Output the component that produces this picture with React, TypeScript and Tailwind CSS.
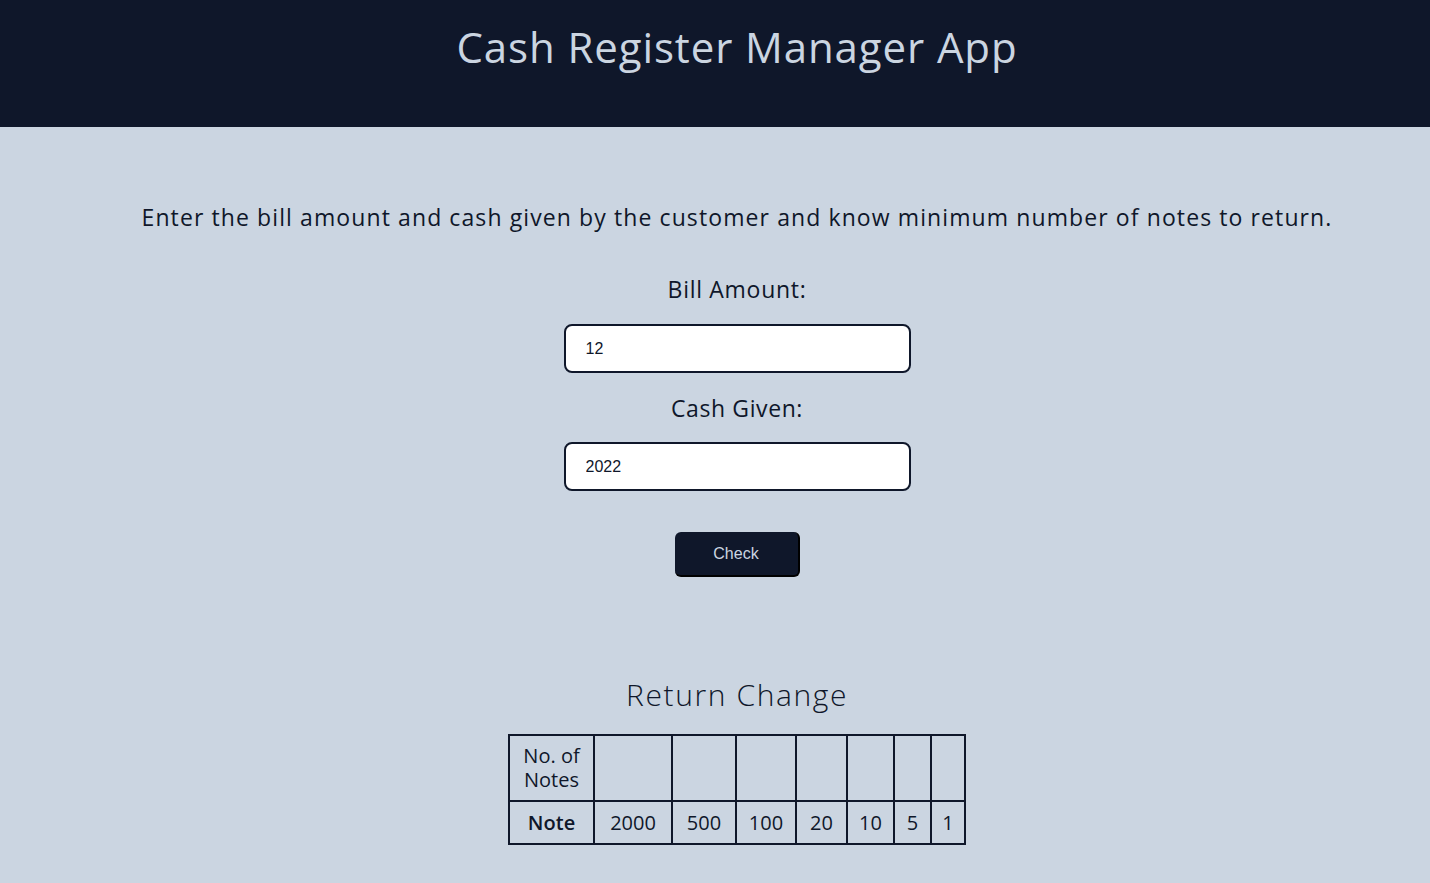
import React from "react";

const F = { fontFamily: '"Open Sans", "DejaVu Sans", sans-serif' };

export default function App() {
  const notes = [
    { v: "2000", w: "w-[78px]" },
    { v: "500", w: "w-[64px]" },
    { v: "100", w: "w-[60px]" },
    { v: "20", w: "w-[51px]" },
    { v: "10", w: "w-[47px]" },
    { v: "5", w: "w-[37px]" },
    { v: "1", w: "w-[34px]" },
  ];
  return (
    <div className="min-h-[883px] bg-[#cbd5e1] text-[#0f172a]" style={F}>
      <header className="h-[127px] bg-[#0f172a] flex justify-center pt-[19px] pl-[44px]">
        <h1 className="text-[42px] leading-[56px] text-[#cbd5e1] font-medium tracking-[0.9px]">
          Cash Register Manager App
        </h1>
      </header>
      <main className="flex flex-col items-center pl-[44px]">
        <p className="mt-[74px] text-[23px] leading-[32px] font-medium tracking-[1.1px]">
          Enter the bill amount and cash given by the customer and know minimum number of notes to return.
        </p>
        <label className="mt-[40px] text-[23px] leading-[32px] font-medium tracking-[0.7px]">Bill Amount:</label>
        <input
          defaultValue="12"
          className="mt-[19px] w-[347px] h-[49px] rounded-[8px] border-2 border-[#0f172a] bg-white pl-[20px] text-[16px] text-[#0f172a] outline-none"
          style={{ fontFamily: '"Liberation Sans", Arial, sans-serif' }}
        />
        <label className="mt-[19px] text-[23px] leading-[32px] font-medium tracking-[0.6px]">Cash Given:</label>
        <input
          defaultValue="2022"
          className="mt-[18px] w-[347px] h-[49px] rounded-[8px] border-2 border-[#0f172a] bg-white pl-[20px] text-[16px] text-[#0f172a] outline-none"
          style={{ fontFamily: '"Liberation Sans", Arial, sans-serif' }}
        />
        <button
          className="mt-[41px] w-[125px] h-[45px] rounded-[6px] bg-[#0f172a] text-[#cbd5e1] text-[16px] border-b-2 border-r-2 border-[#000]"
          style={{ fontFamily: '"Liberation Sans", Arial, sans-serif' }}
        >
          Check
        </button>
        <h2 className="mt-[98px] text-[30px] leading-[40px] font-light tracking-[1.6px]">Return Change</h2>
        <table className="mt-[19px] border-collapse border-2 border-[#0f172a] text-[20px]">
          <tbody>
            <tr className="h-[66px]">
              <th className="w-[85px] border-2 border-[#0f172a] font-medium leading-[24px] px-[10px]">
                No. of Notes
              </th>
              {notes.map((n) => (
                <td key={n.v} className={`${n.w} border-2 border-[#0f172a]`}></td>
              ))}
            </tr>
            <tr className="h-[43px]">
              <th className="border-2 border-[#0f172a] font-semibold">Note</th>
              {notes.map((n) => (
                <td key={n.v} className="border-2 border-[#0f172a] text-center font-normal">
                  {n.v}
                </td>
              ))}
            </tr>
          </tbody>
        </table>
      </main>
    </div>
  );
}
